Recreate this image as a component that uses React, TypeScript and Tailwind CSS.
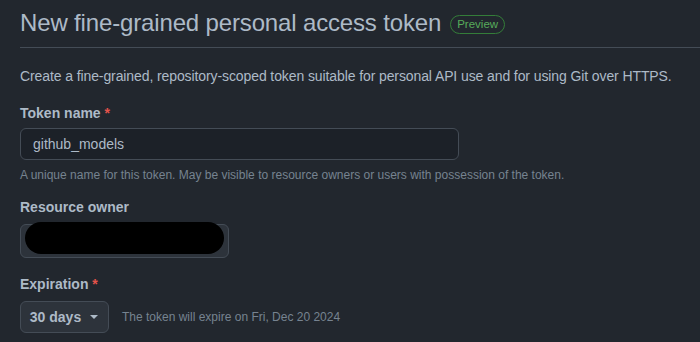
import React from "react";

function Label({ text, required }: { text: string; required?: boolean }) {
  return (
    <p className="text-[14px] font-semibold text-[#adbac7] leading-[20px]">
      {text}
      {required && <span className="text-[#e5534b]"> *</span>}
    </p>
  );
}

export default function App() {
  return (
    <div
      className="w-[700px] h-[342px] overflow-hidden bg-[#22272e] text-[#adbac7] pl-[20px]"
      style={{ fontFamily: '"Liberation Sans", "Segoe UI", sans-serif' }}
    >
      <div className="flex items-center gap-[9px] pt-[8px] pb-[9px] border-b border-[#444c56]">
        <h1 className="text-[24px] leading-[30px] font-normal text-[#adbac7] tracking-[-0.15px]">
          New fine-grained personal access token
        </h1>
        <span className="mt-[3px] h-[19px] px-[6px] flex items-center rounded-full border border-[#347d39] text-[#57ab5a] text-[11.5px] font-medium leading-none">
          Preview
        </span>
      </div>

      <p className="mt-[18px] text-[14px] leading-[20px] tracking-[-0.1px]">
        Create a fine-grained, repository-scoped token suitable for personal API use and for using Git over HTTPS.
      </p>

      <div className="mt-[17px]">
        <Label text="Token name" required />
        <div className="mt-[5px] w-[439px] h-[32px] rounded-[6px] border border-[#444c56] bg-[#1c2128] flex items-center px-[12px] text-[14px] text-[#adbac7]">
          github_models
        </div>
        <p className="mt-[7px] text-[12px] leading-[16px] text-[#768390]">
          A unique name for this token. May be visible to resource owners or users with possession of the token.
        </p>
      </div>

      <div className="mt-[14px]">
        <Label text="Resource owner" />
        <div className="mt-[7px] w-[209px] h-[34px] rounded-[6px] border border-[#444c56] bg-[#2d333b] relative">
          <div className="absolute left-[4px] top-[-3px] w-[199px] h-[32px] bg-black rounded-[16px]" />
        </div>
      </div>

      <div className="mt-[16px]">
        <Label text="Expiration" required />
        <div className="mt-[7px] flex items-center gap-[13px]">
          <button className="h-[32px] w-[89px] rounded-[6px] border border-[#444c56] bg-[#2d333b] flex items-center justify-center gap-[8px] text-[14px] font-semibold text-[#adbac7]">
            30 days
            <svg width="10" height="6" viewBox="0 0 10 6">
              <path d="M1 1l4 4 4-4z" fill="#adbac7" />
            </svg>
          </button>
          <span className="text-[12px] text-[#768390]">The token will expire on Fri, Dec 20 2024</span>
        </div>
      </div>
    </div>
  );
}
